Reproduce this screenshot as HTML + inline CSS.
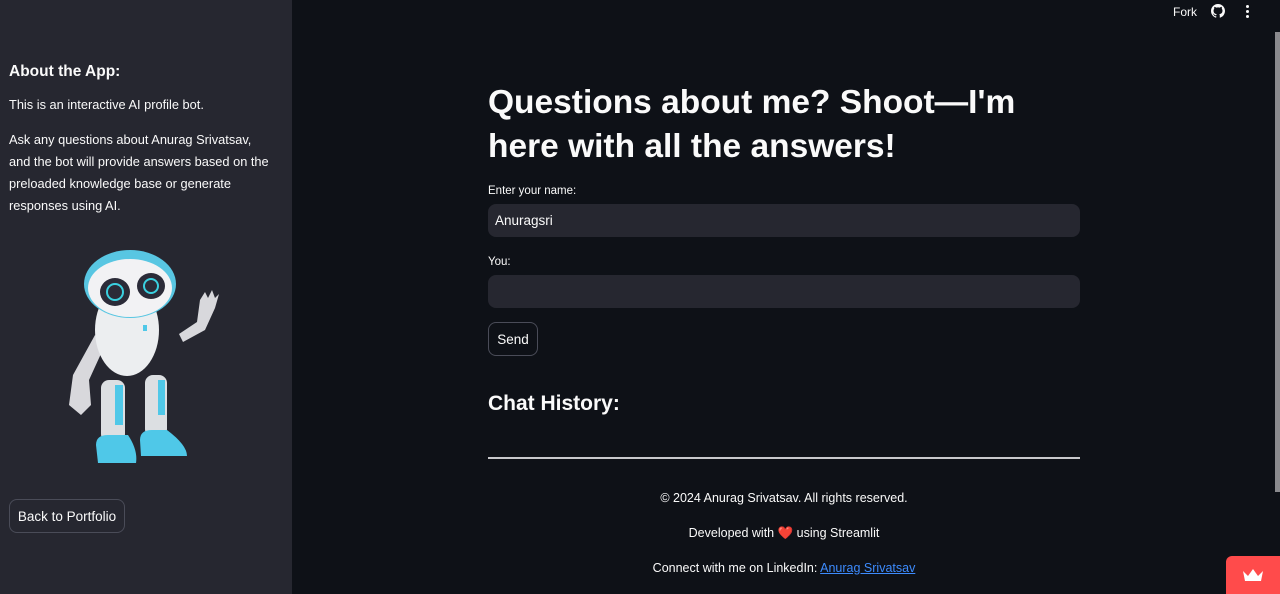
<!DOCTYPE html>
<html><head><meta charset="utf-8"><style>
*{margin:0;padding:0;box-sizing:border-box}
body{width:1280px;height:594px;overflow:hidden;background:#0e1117;font-family:"Liberation Sans",sans-serif;color:#fafafa;position:relative}
.sb{position:absolute;left:0;top:0;width:292px;height:594px;background:#262730}
.sb h3{position:absolute;left:9px;top:63px;font-size:15.5px;font-weight:bold}
.sb p{position:absolute;left:9px;font-size:12.8px;line-height:22px}
.btn{position:absolute;border:1px solid #4a4c58;border-radius:8px;background:transparent;color:#fafafa;font-size:13.5px;display:flex;align-items:center;justify-content:center}
.main h1{position:absolute;left:488px;top:81px;font-size:33.5px;line-height:44px;font-weight:bold;width:600px}
.lbl{position:absolute;left:488px;font-size:11.5px}
.inp{position:absolute;left:488px;width:592px;height:33px;background:#262730;border-radius:8px;font-size:13.5px;padding:9px 7px}
.ft{position:absolute;left:488px;width:592px;text-align:center;font-size:12.5px}
</style></head><body>
<div class="sb">
<h3>About the App:</h3>
<p style="top:94px">This is an interactive AI profile bot.</p>
<p style="top:129px;width:262px">Ask any questions about Anurag Srivatsav, and the bot will provide answers based on the preloaded knowledge base or generate responses using AI.</p>
<svg style="position:absolute;left:60px;top:248px" width="165" height="220" viewBox="60 248 165 220">
<path d="M200 300 l5 -8 l3 6 l4 -8 l3 8 l4 -4 l-4 14 l-10 22 l-22 12 l-4 -8 l18 -12z" fill="#d8d8dc"/>
<path d="M95 335 l-22 40 l-4 30 l12 10 l10 -10 l-2 -25 l16 -35z" fill="#d8d8dc"/>
<ellipse cx="127" cy="330" rx="32" ry="46" fill="#eceef0"/>
<rect x="101" y="380" width="24" height="62" rx="8" fill="#dcdfe2"/>
<rect x="145" y="375" width="22" height="62" rx="8" fill="#dcdfe2"/>
<rect x="115" y="385" width="8" height="40" fill="#4fc8e8"/>
<rect x="158" y="380" width="7" height="35" fill="#4fc8e8"/>
<path d="M96 445 q0 -10 12 -10 h20 q10 15 8 28 h-38z" fill="#4fc8e8"/>
<path d="M140 440 q0 -10 12 -10 h15 q20 15 20 26 h-46z" fill="#4fc8e8"/>
<ellipse cx="130" cy="284" rx="46" ry="34" fill="#58c6e2"/>
<ellipse cx="130" cy="288" rx="42" ry="29" fill="#f2f2f4"/>
<ellipse cx="115" cy="292" rx="15" ry="14" fill="#2b2b38"/>
<ellipse cx="151" cy="286" rx="14" ry="13" fill="#2b2b38"/>
<circle cx="115" cy="292" r="8" fill="none" stroke="#3ad0e0" stroke-width="2"/>
<circle cx="151" cy="286" r="7" fill="none" stroke="#3ad0e0" stroke-width="2"/>
<rect x="143" y="325" width="4" height="6" fill="#4fc8e8"/>
</svg>
<div class="btn" style="left:9px;top:499px;width:116px;height:34px">Back to Portfolio</div>
</div>
<div class="main">
<h1>Questions about me? Shoot—I'm here with all the answers!</h1>
<div class="lbl" style="top:185px">Enter your name:</div>
<div class="inp" style="top:204px">Anuragsri</div>
<div class="lbl" style="top:256px">You:</div>
<div class="inp" style="top:275px"></div>
<div class="btn" style="left:488px;top:322px;width:50px;height:34px">Send</div>
<div style="position:absolute;left:488px;top:392px;font-size:21px;font-weight:bold">Chat History:</div>
<div style="position:absolute;left:488px;top:457px;width:592px;height:2px;background:#c8c8cc"></div>
<div class="ft" style="top:491px">© 2024 Anurag Srivatsav. All rights reserved.</div>
<div class="ft" style="top:526px">Developed with <span style="color:#e23">❤️</span> using Streamlit</div>
<div class="ft" style="top:561px">Connect with me on LinkedIn: <span style="color:#3d8bfd;text-decoration:underline">Anurag Srivatsav</span></div>
</div>
<div style="position:absolute;left:1173px;top:5px;font-size:12px">Fork</div>
<svg style="position:absolute;left:1211px;top:4px" width="14" height="14" viewBox="0 0 16 16"><path fill="#fafafa" d="M8 0C3.58 0 0 3.580 0 8c0 3.54 2.29 6.53 5.47 7.59.4.07.55-.17.55-.38v-1.33c-2.230.48-2.7-1.070-2.7-1.07-.36-.92-.89-1.17-.89-1.17-.73-.5.06-.49.06-.49.8.06 1.23.83 1.23.83.72 1.23 1.88.87 2.34.67.07-.52.28-.87.51-1.07-1.78-.2-3.64-.89-3.640-3.95 0-.87.31-1.59.82-2.15-.08-.2-.36-1.02.08-2.12 0 0 .67-.21 2.2.82a7.6 7.6 0 0 1 4 0c1.53-1.04 2.2-.82 2.2-.82.44 1.1.16 1.92.08 2.12.51.56.82 1.27.82 2.15 0 3.07-1.87 3.75-3.65 3.95.29.25.54.73.54 1.48v2.2c0 .21.15.46.55.38A8 8 0 0 0 16 8c0-4.420-3.58-8-8-8z"/></svg>
<div style="position:absolute;left:1246px;top:5px;width:3px;line-height:4px;font-size:0">
<div style="width:3px;height:3px;background:#fafafa;border-radius:50%;margin-bottom:2px"></div><div style="width:3px;height:3px;background:#fafafa;border-radius:50%;margin-bottom:2px"></div><div style="width:3px;height:3px;background:#fafafa;border-radius:50%"></div></div>
<div style="position:absolute;left:1275px;top:32px;width:5px;height:460px;background:#8a8a8e"></div>
<div style="position:absolute;left:1226px;top:556px;width:54px;height:38px;background:#ff4b4b;border-top-left-radius:6px"><svg style="position:absolute;left:16px;top:12px" width="22" height="14" viewBox="0 0 22 14"><path d="M1 3 l5 5 l5 -7 l5 7 l5 -5 l-2 10 h-16z" fill="#fff"/></svg></div>
</body></html>
